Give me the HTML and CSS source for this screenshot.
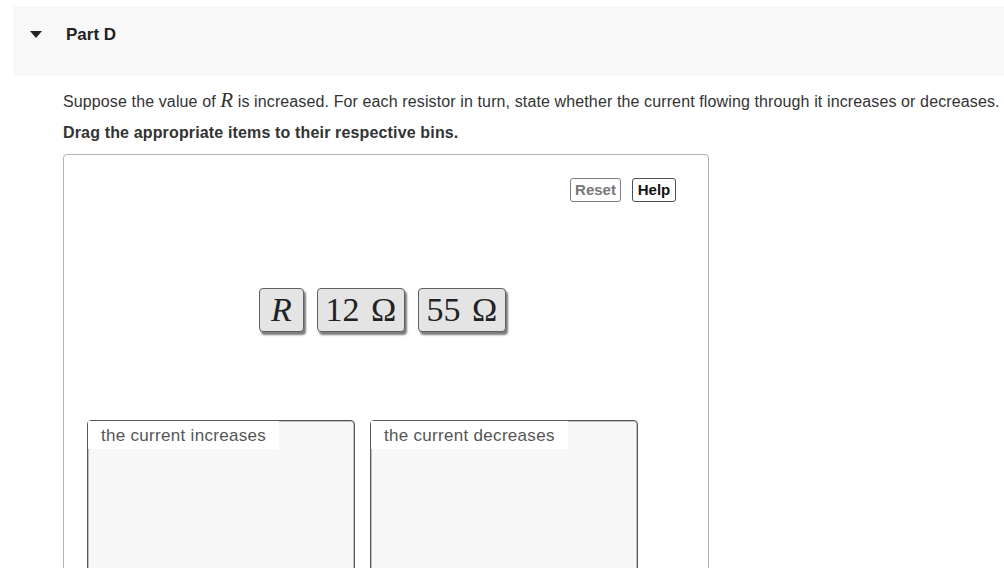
FILE: index.html
```html
<!DOCTYPE html>
<html>
<head>
<meta charset="utf-8">
<link rel="stylesheet" href="styles.css">
</head>
<body>
<div class="part-header">
  <span class="caret"></span>
  <span class="part-title">Part D</span>
</div>
<div class="content">
  <p class="prompt">Suppose the value of <span class="math-i">R</span> is increased. For each resistor in turn, state whether the current flowing through it increases or decreases.</p>
  <p class="instr">Drag the appropriate items to their respective bins.</p>
  <div class="dnd">
    <div class="toolbar">
      <button class="btn btn-reset">Reset</button>
      <button class="btn btn-help">Help</button>
    </div>
    <div class="tiles">
      <div class="tile tile-r"><span class="math-i">R</span></div>
      <div class="tile">12 Ω</div>
      <div class="tile">55 Ω</div>
    </div>
    <div class="bins">
      <div class="bin"><div class="bin-label">the current increases</div></div>
      <div class="bin"><div class="bin-label">the current decreases</div></div>
    </div>
  </div>
</div>
</body>
</html>
```

FILE: styles.css
```css
html, body {
  margin: 0;
  padding: 0;
  background: #fff;
  font-family: "Liberation Sans", Arial, sans-serif;
  color: #333;
  overflow: hidden;
}
.part-header {
  margin: 6px 0 0 13px;
  height: 70px;
  background: #f8f8f8;
  display: flex;
  align-items: flex-start;
  padding-top: 19px;
  box-sizing: border-box;
}
.caret {
  width: 0;
  height: 0;
  border-left: 6px solid transparent;
  border-right: 6px solid transparent;
  border-top: 7px solid #222;
  margin: 6px 0 0 17px;
}
.part-title {
  margin-left: 24px;
  font-weight: bold;
  font-size: 17px;
  color: #222;
  line-height: 20px;
}
.content {
  padding-left: 63px;
}
.prompt {
  margin: 13px 0 0;
  font-size: 16px;
  letter-spacing: 0.12px;
  line-height: 22px;
  white-space: nowrap;
}
.math-i {
  font-family: "Liberation Serif", "DejaVu Serif", serif;
  font-style: italic;
  font-size: 21px;
  letter-spacing: 0;
}
.instr {
  margin: 9px 0 0;
  font-size: 16px;
  letter-spacing: 0.15px;
  font-weight: bold;
  line-height: 22px;
}
.dnd {
  margin-top: 10px;
  width: 646px;
  height: 440px;
  box-sizing: border-box;
  border: 1px solid #b3b3b3;
  border-radius: 4px;
}
.toolbar {
  display: flex;
  justify-content: flex-end;
  gap: 11px;
  padding: 23px 32px 0 0;
}
.btn {
  font-family: "Liberation Sans", Arial, sans-serif;
  font-weight: bold;
  font-size: 15px;
  height: 24px;
  padding: 0 4px;
  background: #fff;
  border-radius: 3px;
  line-height: 20px;
}
.btn-reset {
  border: 1px solid #7a7f85;
  color: #777;
  width: 51px;
}
.btn-help {
  border: 1px solid #4a4f55;
  color: #111;
  width: 44px;
}
.tiles {
  display: flex;
  justify-content: center;
  gap: 13px;
  margin-top: 86px;
  padding-right: 7px;
}
.tile {
  height: 44px;
  box-sizing: border-box;
  padding: 0;
  border: 1px solid #5e6068;
  border-radius: 4px;
  background: #e4e4e4;
  box-shadow: 2px 3px 2px #7c7c7c;
  font-family: "Liberation Serif", "DejaVu Serif", serif;
  font-size: 34px;
  word-spacing: 3px;
  line-height: 42px;
  color: #222;
  width: 88px;
  text-align: center;
}
.tile-r {
  width: 45px;
}
.tile-r .math-i {
  font-size: 34px;
}
.bins {
  display: flex;
  gap: 15px;
  margin-top: 88px;
  padding-left: 23px;
}
.bin {
  width: 268px;
  height: 200px;
  box-sizing: border-box;
  border: 1px solid #55565f;
  box-shadow: inset 0 0 0 1px rgba(85,86,95,0.35);
  border-radius: 4px;
  background: #f7f7f7;
}
.bin-label {
  display: inline-block;
  background: #fff;
  color: #555;
  font-size: 17px;
  letter-spacing: 0.3px;
  line-height: 27px;
  padding: 1px 13px 0 13px;
}
```
